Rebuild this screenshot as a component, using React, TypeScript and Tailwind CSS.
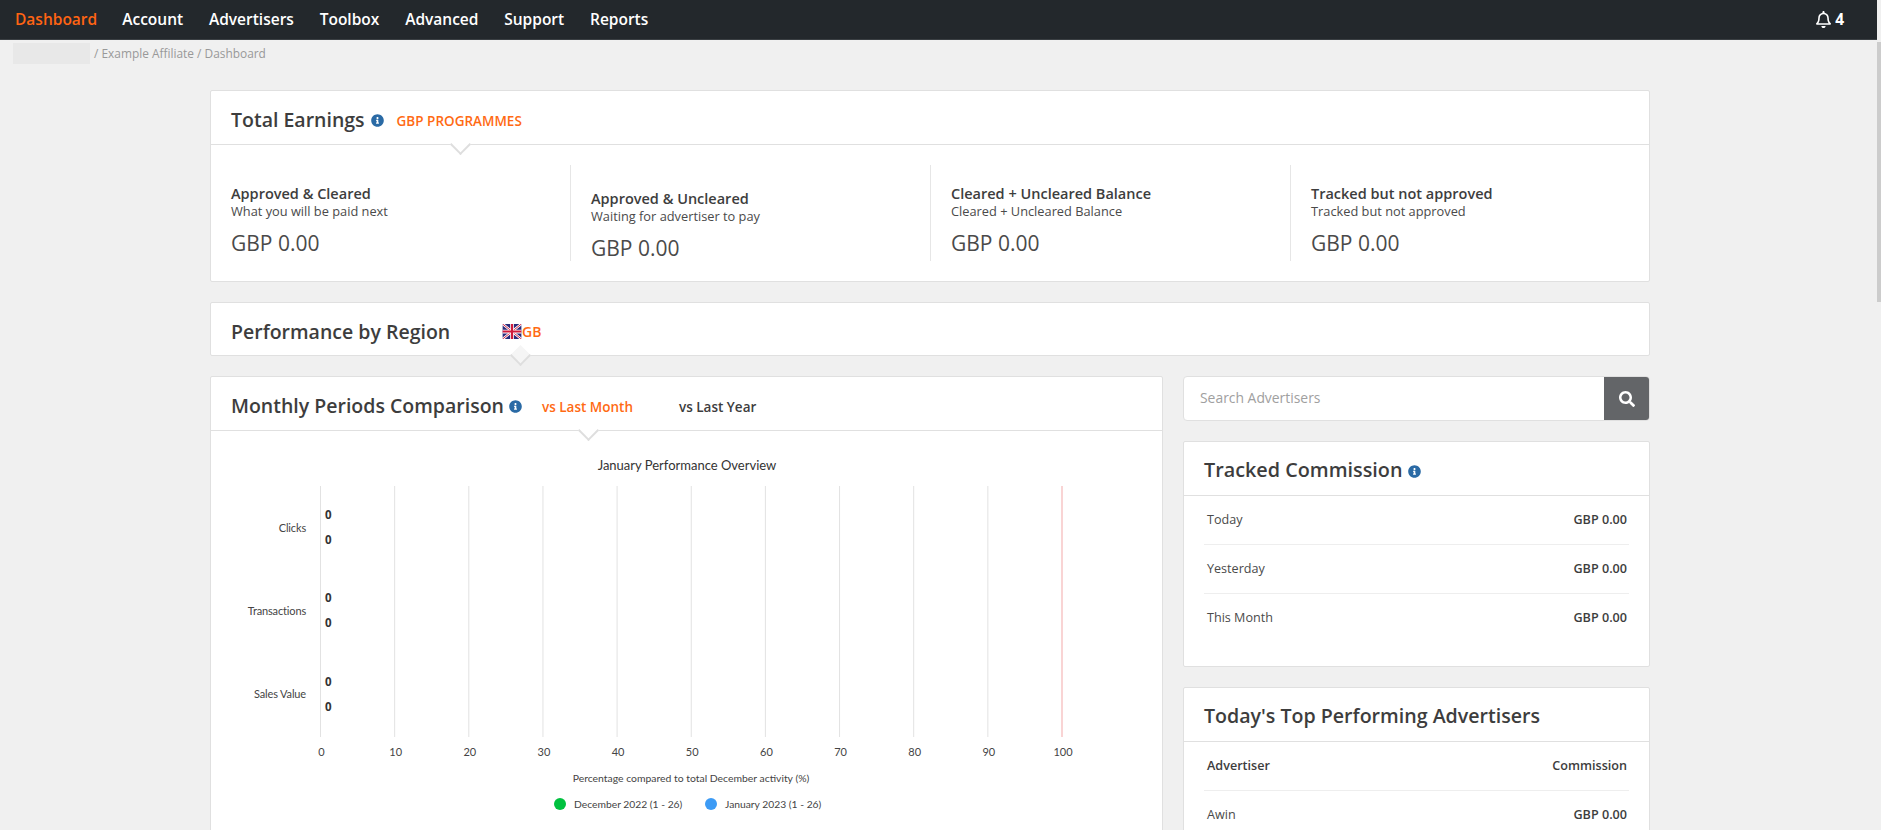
import { FaInfoCircle, FaSearch, FaRegBell } from "react-icons/fa"

const navItems = ["Account", "Advertisers", "Toolbox", "Advanced", "Support", "Reports"]

const earnings = [
  { title: "Approved & Cleared", sub: "What you will be paid next", shift: false },
  { title: "Approved & Uncleared", sub: "Waiting for advertiser to pay", shift: true },
  { title: "Cleared + Uncleared Balance", sub: "Cleared + Uncleared Balance", shift: false },
  { title: "Tracked but not approved", sub: "Tracked but not approved", shift: false },
]

const ticks = [0, 10, 20, 30, 40, 50, 60, 70, 80, 90, 100]

const groups = [
  { label: "Clicks", y: 528, a: 515, b: 540 },
  { label: "Transactions", y: 611, a: 598, b: 623 },
  { label: "Sales Value", y: 694, a: 682, b: 707 },
]

function Info() {
  return <FaInfoCircle className="h-[13px] w-[13px] shrink-0 text-[#2a6aa5]" />
}

function Arrow({ className }: { className: string }) {
  return <div className={"absolute h-[15px] w-[15px] rotate-45 border-r-2 border-b-2 border-[#dedede] " + className} />
}

function UkFlag() {
  return (
    <svg viewBox="0 0 60 48" className="h-[15px] w-[20px] shrink-0">
      <rect width="60" height="48" fill="#2a2a7a" />
      <path d="M0 0L60 48M60 0L0 48" stroke="#fff" strokeWidth="8" />
      <path d="M0 0L60 48M60 0L0 48" stroke="#cf1b3c" strokeWidth="3" />
      <path d="M30 0V48M0 24H60" stroke="#fff" strokeWidth="12" />
      <path d="M30 0V48M0 24H60" stroke="#cf1b3c" strokeWidth="7" />
    </svg>
  )
}

function Row({ left, right, bold, last }: { left: string; right: string; bold?: boolean; last?: boolean }) {
  return (
    <div className={"flex h-[49px] items-center justify-between pl-[3px] pr-[2px] text-[12.6px] " + (last ? "" : "border-b border-[#eeeeee]")}>
      <span className={bold ? "font-semibold text-[#3d3d3d]" : "text-[#4a4a4a]"}>{left}</span>
      <span className="font-semibold text-[#3d3d3d]">{right}</span>
    </div>
  )
}

function PerfChart() {
  const x = (t: number) => 320.5 + t * 7.415
  return (
    <svg width="951" height="400" viewBox="211 431 951 400" className="block" fontFamily="Lato, sans-serif">
      <text x="687" y="470" textAnchor="middle" fontSize="13" fill="#333">January Performance Overview</text>
      {ticks.map((t) => (
        <g key={t}>
          <line x1={x(t)} x2={x(t)} y1="486" y2="737" stroke={t === 100 ? "#f3a9a9" : "#e2e2e2"} />
          <text x={x(t) + 1} y="756" textAnchor="middle" fontSize="11" fill="#444">{t}</text>
        </g>
      ))}
      {groups.map((g) => (
        <g key={g.label}>
          <text x="306" y={g.y + 4} textAnchor="end" fontSize="11" letterSpacing="-0.15" fill="#444">{g.label}</text>
          <text x="325" y={g.a + 4} fontSize="11.5" fontWeight="700" fill="#333" fontFamily="Open Sans, sans-serif">0</text>
          <text x="325" y={g.b + 4} fontSize="11.5" fontWeight="700" fill="#333" fontFamily="Open Sans, sans-serif">0</text>
        </g>
      ))}
      <text x="691" y="782" textAnchor="middle" fontSize="10.4" fill="#444">Percentage compared to total December activity (%)</text>
      <circle cx="560" cy="804" r="6" fill="#00c13f" />
      <text x="574" y="808" fontSize="10.3" fill="#444">December 2022 (1 - 26)</text>
      <circle cx="711" cy="804" r="6" fill="#3d9bf5" />
      <text x="725" y="808" fontSize="10.3" fill="#444">January 2023 (1 - 26)</text>
    </svg>
  )
}

export default function App() {
  return (
    <div className="relative h-[830px] overflow-hidden bg-[#f0f0f0] font-['Open_Sans',sans-serif] text-[#3d3d3d]">
      <nav className="mr-[4px] flex h-[40px] items-center border-b border-[#3a3f43] bg-[#23282c] pl-[15px] pr-[33px] text-[15.5px] font-semibold text-white">
        <span className="text-[#ff6413]">Dashboard</span>
        <div className="ml-[25px] flex gap-[25.8px]">
          {navItems.map((item) => (
            <span key={item}>{item}</span>
          ))}
        </div>
        <div className="ml-auto flex items-center gap-[3px] font-bold">
          <FaRegBell className="h-[17px] w-[17px]" />
          <span>4</span>
        </div>
      </nav>

      <div className="flex h-[24px] items-center pl-[13px] pt-[4px] text-[11.9px] text-[#999999]">
        <div className="mr-[4px] h-[21px] w-[77px] -translate-y-[1px] bg-[#e8e8e8]" />
        <span>/ Example Affiliate / Dashboard</span>
      </div>

      <div className="ml-[210px] mt-[26px] flex w-[1440px] flex-col gap-[20px]">
        <section className="relative rounded-[2px] border border-[#e0e0e0] bg-white">
          <header className="relative flex h-[54px] items-center gap-[6px] border-b border-[#e0e0e0] pl-[20px] pt-[5px]">
            <h2 className="text-[19.5px] font-semibold text-[#3d3d3d]">Total Earnings</h2>
            <Info />
            <span className="ml-[7px] mt-[3px] text-[13.5px] font-semibold text-[#ff6a13]">GBP PROGRAMMES</span>
            <Arrow className="-bottom-[8px] left-[242px] bg-white" />
          </header>
          <div className="grid grid-cols-[359px_360px_360px_1fr] pb-[20px] pt-[20px]">
            {earnings.map((e, i) => (
              <div key={e.title} className={"h-[96px] pl-[20px] " + (i > 0 ? "border-l border-[#e6e6e6]" : "")}>
                <div className={e.shift ? "pt-[25px]" : "pt-[20px]"}>
                  <div className="text-[14.5px] font-semibold leading-[18px]">{e.title}</div>
                  <div className="text-[12.8px] leading-[17px] text-[#4a4a4a]">{e.sub}</div>
                  <div className="mt-[9px] text-[21px] leading-[28px] text-[#4a4a4a]">GBP 0.00</div>
                </div>
              </div>
            ))}
          </div>
        </section>

        <section className="relative flex h-[54px] items-center rounded-[2px] border border-[#e0e0e0] bg-white pl-[20px] pt-[5px]">
          <h2 className="w-[271px] text-[19.5px] font-semibold">Performance by Region</h2>
          <UkFlag />
          <span className="text-[14px] font-semibold text-[#ff6a13]">GB</span>
          <Arrow className="-bottom-[8px] left-[302px] bg-[#f5f5f5]" />
        </section>

        <div className="flex gap-[20px]">
          <section className="w-[953px] rounded-[2px] border border-[#e0e0e0] bg-white">
            <header className="relative flex h-[54px] items-center border-b border-[#e0e0e0] pl-[20px] pt-[5px]">
              <h2 className="text-[19.5px] font-semibold">Monthly Periods Comparison</h2>
              <span className="ml-[5px]"><Info /></span>
              <span className="ml-[20px] mt-[3px] text-[13.5px] font-semibold text-[#ff6a13]">vs Last Month</span>
              <span className="ml-[46px] mt-[3px] text-[13.5px] font-semibold">vs Last Year</span>
              <Arrow className="-bottom-[8px] left-[370px] bg-white" />
            </header>
            <PerfChart />
          </section>

          <div className="flex w-[467px] flex-col gap-[20px]">
            <div className="flex h-[45px] overflow-hidden rounded-[4px] border border-[#e0e0e0] bg-white">
              <input
                placeholder="Search Advertisers"
                className="min-w-0 flex-1 pl-[16px] text-[13.9px] outline-none placeholder:text-[#a0a0a0]"
              />
              <div className="flex w-[45px] items-center justify-center bg-[#636568]">
                <FaSearch className="h-[16px] w-[16px] text-white" />
              </div>
            </div>

            <section className="h-[226px] rounded-[2px] border border-[#e0e0e0] bg-white">
              <header className="flex h-[54px] items-center gap-[6px] border-b border-[#e0e0e0] pl-[20px] pt-[3px]">
                <h2 className="text-[19.8px] font-semibold">Tracked Commission</h2>
                <span className="mt-[2px]"><Info /></span>
              </header>
              <div className="px-[20px]">
                <Row left="Today" right="GBP 0.00" />
                <Row left="Yesterday" right="GBP 0.00" />
                <Row left="This Month" right="GBP 0.00" last />
              </div>
            </section>

            <section className="rounded-[2px] border border-[#e0e0e0] bg-white">
              <header className="flex h-[54px] items-center border-b border-[#e0e0e0] pl-[20px] pt-[2px]">
                <h2 className="text-[19.6px] font-semibold">Today's Top Performing Advertisers</h2>
              </header>
              <div className="px-[20px]">
                <Row left="Advertiser" right="Commission" bold />
                <Row left="Awin" right="GBP 0.00" />
              </div>
            </section>
          </div>
        </div>
      </div>

      <div className="absolute right-0 top-[42px] h-[260px] w-[4px] bg-[#cccccc]" />
    </div>
  )
}
